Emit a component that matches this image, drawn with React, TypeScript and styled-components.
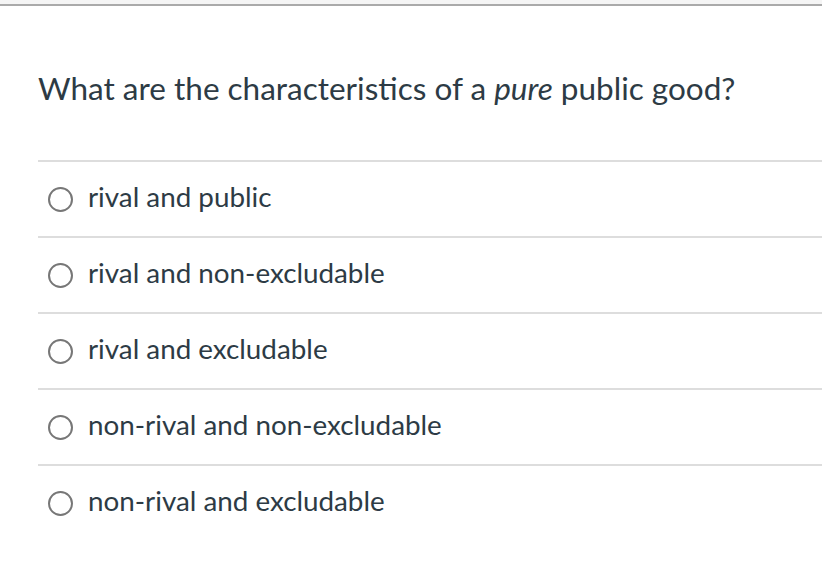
import styled, { createGlobalStyle } from "styled-components";

const GlobalStyle = createGlobalStyle`
  html, body {
    margin: 0;
    padding: 0;
    background: #ffffff;
  }
  body {
    font-family: Lato, "Helvetica Neue", Arial, sans-serif;
    color: #2d3b45;
  }
`;

const options = [
  "rival and public",
  "rival and non-excludable",
  "rival and excludable",
  "non-rival and non-excludable",
  "non-rival and excludable",
];

export default function App() {
  return (
    <>
      <GlobalStyle />
      <Page>
        <TopBar />
        <Question>
          What are the characteristics of a <em>pure</em> public good?
        </Question>
        <Answers>
          {options.map((text) => (
            <Answer key={text}>
              <Radio />
              <Label>{text}</Label>
            </Answer>
          ))}
        </Answers>
      </Page>
    </>
  );
}

const Page = styled.div`
  width: 822px;
  height: 568px;
  overflow: hidden;
  background: #ffffff;
`;

const TopBar = styled.div`
  height: 4px;
  background: #f5f5f5;
  border-bottom: 2px solid #aaaaaa;
`;

const Question = styled.p`
  margin: 0;
  padding: 63px 0 0 38px;
  font-size: 31.5px;
  line-height: 38px;
  color: #2d3b45;
`;

const Answers = styled.ul`
  list-style: none;
  margin: 53px 0 0 38px;
  padding: 0;
`;

const Answer = styled.li`
  display: flex;
  align-items: center;
  gap: 15px;
  height: 74px;
  padding-left: 10px;
  border-top: 2px solid #dddddd;
`;

const Radio = styled.span`
  box-sizing: border-box;
  width: 25px;
  height: 25px;
  border-radius: 50%;
  border: 2px solid #777777;
  flex-shrink: 0;
`;

const Label = styled.span`
  font-size: 27.8px;
  margin-bottom: 5px;
  color: #2d3b45;
`;
